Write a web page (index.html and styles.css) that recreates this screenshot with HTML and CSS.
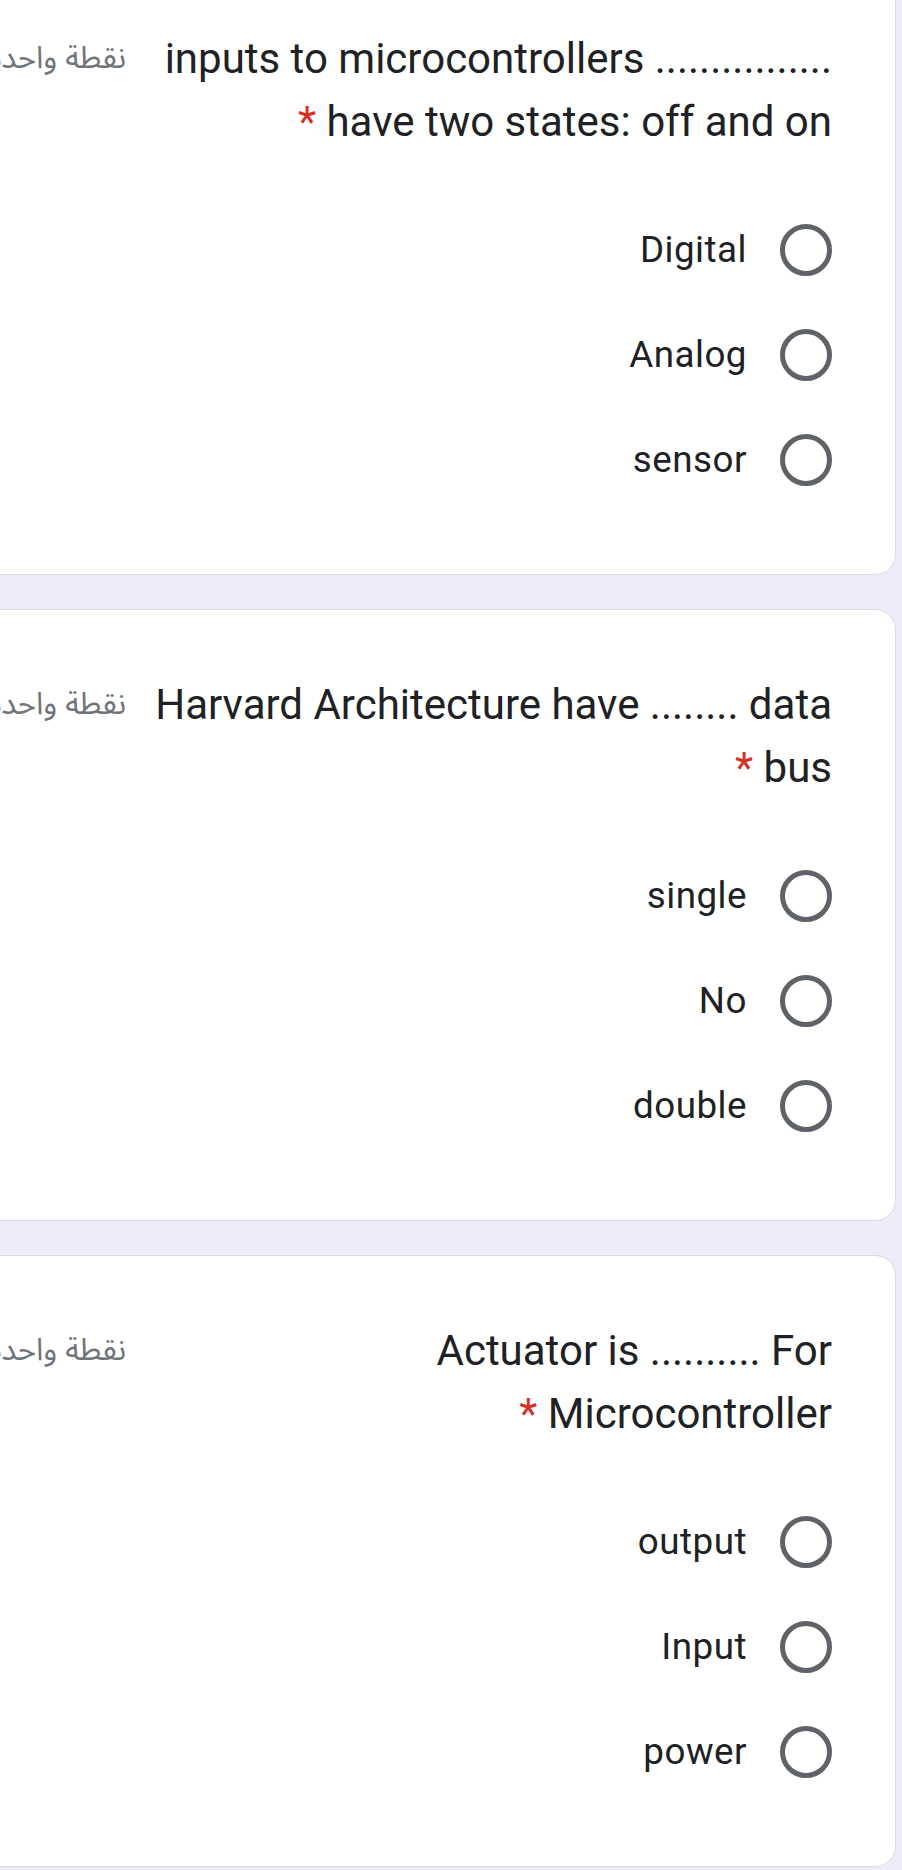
FILE: index.html
```html
<!DOCTYPE html>
<html lang="ar">
<head>
<meta charset="utf-8">
<title>Form</title>
<link rel="stylesheet" href="styles.css">
</head>
<body>
<main class="form">
  <section class="card">
    <div class="q-head">
      <span class="points" dir="rtl">نقطة واحدة</span>
      <h2 class="q-title">inputs to microcontrollers ................<br><span class="req">*</span> have two states: off and on</h2>
    </div>
    <div class="options" role="radiogroup">
      <label class="option"><span class="opt-label">Digital</span><span class="radio"></span></label>
      <label class="option"><span class="opt-label">Analog</span><span class="radio"></span></label>
      <label class="option"><span class="opt-label">sensor</span><span class="radio"></span></label>
    </div>
  </section>
  <section class="card">
    <div class="q-head">
      <span class="points" dir="rtl">نقطة واحدة</span>
      <h2 class="q-title">Harvard Architecture have ........ data<br><span class="req">*</span> bus</h2>
    </div>
    <div class="options" role="radiogroup">
      <label class="option"><span class="opt-label">single</span><span class="radio"></span></label>
      <label class="option"><span class="opt-label">No</span><span class="radio"></span></label>
      <label class="option"><span class="opt-label">double</span><span class="radio"></span></label>
    </div>
  </section>
  <section class="card">
    <div class="q-head">
      <span class="points" dir="rtl">نقطة واحدة</span>
      <h2 class="q-title">Actuator is .......... For<br><span class="req">*</span> Microcontroller</h2>
    </div>
    <div class="options" role="radiogroup">
      <label class="option"><span class="opt-label">output</span><span class="radio"></span></label>
      <label class="option"><span class="opt-label">Input</span><span class="radio"></span></label>
      <label class="option"><span class="opt-label">power</span><span class="radio"></span></label>
    </div>
  </section>
</main>
</body>
</html>
```
FILE: styles.css
```css
html, body {
  margin: 0;
  padding: 0;
  background: #efebf8;
  overflow: hidden;
}
body {
  width: 902px;
  height: 1870px;
  font-family: Roboto, "Liberation Sans", sans-serif;
}
.form {
  margin: -37px 0 0 -73px;
  width: 969px;
  display: flex;
  flex-direction: column;
  gap: 34px;
}
.card {
  background: #ffffff;
  border: 1px solid #dadce0;
  border-radius: 21px;
  padding: 63px 63px 62px;
}
.q-head {
  display: flex;
  align-items: flex-start;
  padding-bottom: 44px;
}
.points {
  flex: none;
  width: 135px;
  text-align: right;
  white-space: nowrap;
  font-family: "Noto Sans Arabic", "DejaVu Sans", sans-serif;
  font-size: 31px;
  line-height: 63px;
  color: #70757a;
}
.q-title {
  flex: 1;
  margin: 0;
  text-align: right;
  white-space: nowrap;
  font-family: Roboto, "Liberation Sans", sans-serif;
  font-weight: 400;
  font-size: 42px;
  line-height: 63px;
  color: #202124;
}
.req {
  color: #d93025;
}
.options {
  display: flex;
  flex-direction: column;
}
.option {
  height: 105px;
  display: flex;
  align-items: center;
  justify-content: flex-end;
  gap: 33px;
}
.opt-label {
  font-family: Roboto, "Liberation Sans", sans-serif;
  font-size: 36.75px;
  letter-spacing: 0.5px;
  color: #202124;
}
.radio {
  flex: none;
  width: 52px;
  height: 52px;
  box-sizing: border-box;
  border: 5px solid #5f6368;
  border-radius: 50%;
}
```
